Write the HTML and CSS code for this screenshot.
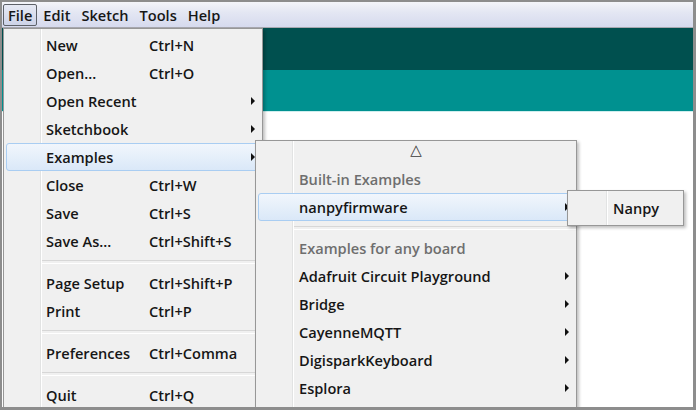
FILE: index.html
```html
<!DOCTYPE html>
<html lang="en">

<head>
    <meta charset="UTF-8" />
    <title>Arduino - File menu</title>
    <link rel="stylesheet" href="styles.css">
</head>

<body>
    <div class="window">
        <!-- 菜单栏 -->
        <div class="menubar">
            <span class="top-item active">File</span>
            <span class="top-item">Edit</span>
            <span class="top-item">Sketch</span>
            <span class="top-item">Tools</span>
            <span class="top-item">Help</span>
        </div>
        <!-- 编辑器背景 -->
        <div class="editor">
            <div class="band-dark"></div>
            <div class="band-teal"></div>
            <div class="sheet"></div>
        </div>

        <!-- File 菜单 -->
        <ul class="menu file-menu">
            <li class="item"><span>New</span><span class="key">Ctrl+N</span></li>
            <li class="item"><span>Open...</span><span class="key">Ctrl+O</span></li>
            <li class="item"><span>Open Recent</span><span class="key"></span><i class="arrow"></i></li>
            <li class="item"><span>Sketchbook</span><span class="key"></span><i class="arrow"></i></li>
            <li class="item hover"><span>Examples</span><span class="key"></span><i class="arrow"></i></li>
            <li class="item"><span>Close</span><span class="key">Ctrl+W</span></li>
            <li class="item"><span>Save</span><span class="key">Ctrl+S</span></li>
            <li class="item"><span>Save As...</span><span class="key">Ctrl+Shift+S</span></li>
            <li class="sep"></li>
            <li class="item"><span>Page Setup</span><span class="key">Ctrl+Shift+P</span></li>
            <li class="item"><span>Print</span><span class="key">Ctrl+P</span></li>
            <li class="sep"></li>
            <li class="item"><span>Preferences</span><span class="key">Ctrl+Comma</span></li>
            <li class="sep"></li>
            <li class="item"><span>Quit</span><span class="key">Ctrl+Q</span></li>
        </ul>

        <!-- Examples 子菜单 -->
        <ul class="menu examples-menu">
            <li class="scroll-up">&#9651;</li>
            <li class="item disabled"><span>Built-in Examples</span></li>
            <li class="item hover"><span>nanpyfirmware</span><i class="arrow"></i></li>
            <li class="sep"></li>
            <li class="item disabled"><span>Examples for any board</span></li>
            <li class="item"><span>Adafruit Circuit Playground</span><i class="arrow"></i></li>
            <li class="item"><span>Bridge</span><i class="arrow"></i></li>
            <li class="item"><span>CayenneMQTT</span><i class="arrow"></i></li>
            <li class="item"><span>DigisparkKeyboard</span><i class="arrow"></i></li>
            <li class="item"><span>Esplora</span><i class="arrow"></i></li>
        </ul>

        <!-- nanpyfirmware 子菜单 -->
        <ul class="menu nanpy-menu">
            <li class="item"><span>Nanpy</span></li>
        </ul>
    </div>
</body>

</html>
```

FILE: styles.css
```css
* {
    margin: 0;
    padding: 0;
    box-sizing: border-box;
}

ul {
    list-style: none;
}

body {
    width: 696px;
    height: 410px;
    overflow: hidden;
    background: #fff;
    font: 600 14.6px "Open Sans", "Liberation Sans", sans-serif;
    color: #161616;
}

.window {
    position: relative;
    width: 696px;
    height: 410px;
    display: flex;
    flex-direction: column;
    border: 2px solid #8d8d8d;
    border-right-width: 3px;
    border-bottom-width: 3px;
    overflow: hidden;
}

/* 菜单栏 */
.menubar {
    height: 26px;
    display: flex;
    align-items: center;
    gap: 1px;
    padding: 0 1px;
    background: linear-gradient(#f4f5fa 0%, #e4e7f3 40%, #d6daee 100%);
    border-bottom: 1px solid #a8a8b0;
}

.menubar .top-item {
    height: 22px;
    line-height: 20px;
    padding: 0 4px;
    border: 1px solid transparent;
    border-radius: 2px;
}

.menubar .top-item.active {
    border-color: #5d6168;
    background: linear-gradient(#e6e9f4, #cdd3e8);
}

/* 编辑器背景 */
.editor {
    flex: 1;
    display: flex;
    flex-direction: column;
}

.band-dark {
    height: 42px;
    background: #00504f;
}

.band-teal {
    height: 42px;
    background: #009190;
    border-bottom: 1px solid #cfeeee;
}

.sheet {
    flex: 1;
    background: #fff;
}

/* 弹出菜单 */
.menu {
    position: absolute;
    background: #f0f0f0 linear-gradient(90deg, transparent 36px, #e2e3e3 36px, #e2e3e3 37px, #fff 37px, #fff 38px, transparent 38px);
    border: 1px solid #979797;
    box-shadow: 2px 2px 3px rgba(0, 0, 0, 0.25);
}

.menu .item {
    position: relative;
    height: 28px;
    display: flex;
    align-items: center;
    margin: 0 2px;
    padding-left: 39px;
    border: 1px solid transparent;
    border-radius: 3px;
    white-space: nowrap;
}

.menu .item.hover {
    background: linear-gradient(#f1f6fc, #dae8f8);
    border-color: #a9cdf2;
}

.menu .item.disabled {
    color: #6e6e6e;
}

.menu .arrow {
    position: absolute;
    right: 4px;
    top: 9px;
    width: 0;
    height: 0;
    border-top: 4px solid transparent;
    border-bottom: 4px solid transparent;
    border-left: 4px solid #111;
}

.menu .sep {
    height: 13px;
    margin-left: 38px;
    display: flex;
    align-items: center;
}

.menu .sep::after {
    content: "";
    flex: 1;
    height: 2px;
    border-top: 1px solid #d7d7d7;
    border-bottom: 1px solid #fff;
}

/* File 菜单 */
.file-menu {
    left: 1px;
    top: 26px;
    width: 260px;
    height: 392px;
    padding-top: 2px;
}

.file-menu .item > span:first-child {
    width: 103px;
}

.file-menu .sep {
    height: 14px;
}

/* Examples 子菜单 */
.examples-menu {
    left: 253px;
    top: 138px;
    width: 322px;
    height: 290px;
}

.examples-menu .scroll-up {
    height: 24px;
    line-height: 24px;
    text-align: center;
    font: 400 15px "DejaVu Sans", sans-serif;
    color: #3a3a3a;
}

.examples-menu .item {
    padding-left: 40px;
}

/* nanpy 子菜单 */
.nanpy-menu {
    left: 565px;
    top: 188px;
    width: 117px;
    height: 36px;
    padding-top: 2px;
    background: #f0f0f0 linear-gradient(90deg, transparent 38px, #e2e3e3 38px, #e2e3e3 39px, #fff 39px, #fff 40px, transparent 40px);
}

.nanpy-menu .item {
    height: 30px;
    padding-left: 42px;
}
```
